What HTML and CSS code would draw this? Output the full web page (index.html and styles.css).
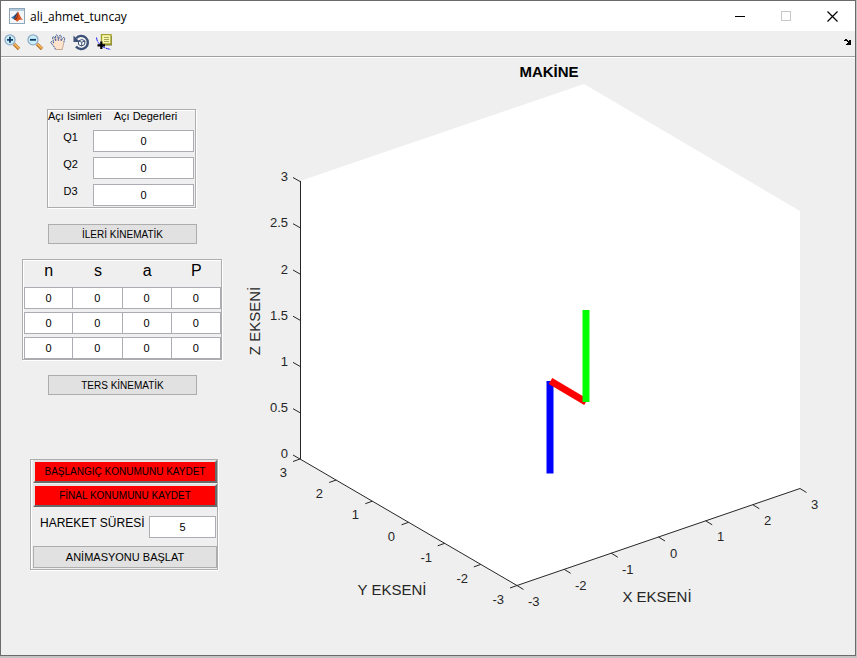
FILE: index.html
```html
<!DOCTYPE html>
<html lang="tr">
<head>
    <meta charset="UTF-8">
    <meta name="viewport" content="width=device-width, initial-scale=1.0">
    <title>ali_ahmet_tuncay</title>
    <link rel="stylesheet" href="styles.css">
</head>
<body>

<div class="window">
    <header class="titlebar">
        <svg class="app-icon" width="16" height="16" viewBox="0 0 16 16">
            <rect x="0.5" y="0.5" width="15" height="15" fill="#f4f7fa" stroke="#8fa5b8"/>
            <rect x="1" y="1" width="14" height="2" fill="#b4cbdd"/>
            <path d="M2 9.5 L5.5 7.5 L7.5 9 L5 11.5 Z" fill="#3d78b4"/>
            <path d="M5.5 7.5 L9 3.5 L8 8.5 L5 11.5 Z" fill="#26436e"/>
            <path d="M9 3.5 C10 5 11.5 10 14 12 C12 11 10.5 11 8 14 C7.5 12.5 6.5 12 5 11.5 C7 10.5 7.8 6 9 3.5 Z" fill="#d9541e"/>
            <path d="M9 3.5 C8.5 7 8 10 5 11.5 L7 12 C9 9.5 9.5 6 9 3.5 Z" fill="#8c2a14"/>
        </svg>
        <h1>ali_ahmet_tuncay</h1>
        <div class="window-buttons">
            <button type="button" aria-label="Minimize">
                <svg width="11" height="11"><path d="M0 5.5 H10" stroke="#000"/></svg>
            </button>
            <button type="button" aria-label="Maximize" disabled>
                <svg width="11" height="11"><rect x="0.5" y="0.5" width="9" height="9" fill="none" stroke="#c8c8c8"/></svg>
            </button>
            <button type="button" aria-label="Close">
                <svg width="11" height="11"><path d="M0.5 0.5 L10.5 10.5 M10.5 0.5 L0.5 10.5" stroke="#000" stroke-width="1.2"/></svg>
            </button>
        </div>
    </header>

    <div class="toolbar">
        <button type="button" aria-label="Zoom In">
            <svg width="17" height="17" viewBox="0 0 17 17">
                <path d="M10 10 L15 15" stroke="#b9762b" stroke-width="3.4"/>
                <path d="M10.5 10 L15 14.3" stroke="#f2b35c" stroke-width="1.8"/>
                <circle cx="6" cy="5.8" r="5" fill="#c9effa" stroke="#8fabc8" stroke-width="1.3"/>
                <path d="M3 5.8 H9 M6 2.8 V8.8" stroke="#123a66" stroke-width="1.8"/>
            </svg>
        </button>
        <button type="button" aria-label="Zoom Out">
            <svg width="17" height="17" viewBox="0 0 17 17">
                <path d="M10 10 L15 15" stroke="#b9762b" stroke-width="3.4"/>
                <path d="M10.5 10 L15 14.3" stroke="#f2b35c" stroke-width="1.8"/>
                <circle cx="6" cy="5.8" r="5" fill="#c9effa" stroke="#8fabc8" stroke-width="1.3"/>
                <path d="M3 5.8 H9" stroke="#123a66" stroke-width="1.8"/>
            </svg>
        </button>
        <button type="button" aria-label="Pan">
            <svg width="17" height="17" viewBox="0 0 17 17">
                <path d="M5.5 15.5 C4.5 12.5 2 10.5 0.8 8.5 C0.8 7.2 2.5 7.5 3.8 9 L2.6 3.8 C2.6 2.4 4 2.3 4.5 3.6 L5.8 7 L5.6 2 C5.8 0.6 7.4 0.6 7.7 2 L8.4 6.5 L9.3 2 C9.7 0.8 11.2 1 11.2 2.3 L11 7 L13 3.8 C13.8 2.8 15 3.5 14.7 4.7 L13.6 9.5 C13.4 12 12.5 13 12.2 15.5 Z" fill="#ffe3cd"/>
                <path d="M5.5 15.5 C4.5 12.5 2 10.5 0.8 8.5 C0.8 7.2 2.5 7.5 3.8 9 L2.6 3.8 C2.6 2.4 4 2.3 4.5 3.6 L5.8 7 L5.6 2 C5.8 0.6 7.4 0.6 7.7 2 L8.4 6.5 L9.3 2 C9.7 0.8 11.2 1 11.2 2.3 L11 7 L13 3.8 C13.8 2.8 15 3.5 14.7 4.7 L13.6 9.5" fill="none" stroke="#35599a" stroke-dasharray="2 0.7"/>
                <path d="M13.6 9.5 C13.4 12 12.5 13 12.2 15.5 H5.5" fill="none" stroke="#c9a58c"/>
            </svg>
        </button>
        <button type="button" aria-label="Rotate 3D">
            <svg width="17" height="17" viewBox="0 0 17 17">
                <path d="M3.2 4.2 A6.6 6.6 0 1 1 3 12.5" fill="none" stroke="#3c5078" stroke-width="2.4"/>
                <path d="M0.5 1.5 V8 H7 Z" fill="#3c5078"/>
                <path d="M5.5 7 L9 5.5 L12 7 L11.5 10.5 L8.5 12 L5.5 10.5 Z" fill="#fff" stroke="#3c5078"/>
                <path d="M5.5 7 L8.7 8.2 L12 7 M8.7 8.2 V12" fill="none" stroke="#3c5078"/>
            </svg>
        </button>
        <button type="button" aria-label="Data Cursor">
            <svg width="17" height="17" viewBox="0 0 17 17">
                <path d="M0.5 3.5 C1 7 2 9 4.5 11 C7 13.5 10 14.5 15 15.5" fill="none" stroke="#1a1aff" stroke-dasharray="4 1"/>
                <rect x="7" y="2" width="9" height="9.5" fill="#77773c"/>
                <rect x="5.5" y="0.5" width="9.5" height="9.5" fill="#f8f8b0" stroke="#a3a332" stroke-width="1.4"/>
                <path d="M8 3.5 H13 M8 5.5 H13 M8 7.5 H13" stroke="#a3a35a"/>
                <path d="M1.5 11.3 H9 M5.3 7.5 V15" stroke="#000" stroke-width="2.2"/>
            </svg>
        </button>
        <button type="button" class="dock" aria-label="Dock Figure">
            <svg width="7" height="6" viewBox="0 0 7 6">
                <path d="M0 1 H1 V0 H3 V1 H4 V2 H5 V1 H7 V6 H2 V5 H3 V4 H4 V3 H3 V2 H0 Z" fill="#000"/>
            </svg>
        </button>
    </div>

    <main class="content">
        <form class="controls">
            <fieldset class="panel angles">
                <span>Açı Isimleri</span>
                <span>Açı Degerleri</span>
                <label for="q1">Q1</label>
                <input type="text" id="q1" value="0">
                <label for="q2">Q2</label>
                <input type="text" id="q2" value="0">
                <label for="d3">D3</label>
                <input type="text" id="d3" value="0">
            </fieldset>

            <button type="button" class="btn">İLERİ KİNEMATİK</button>

            <div class="panel matrix">
                <table>
                    <thead>
                        <tr>
                            <th scope="col" id="col-n">n</th>
                            <th scope="col" id="col-s">s</th>
                            <th scope="col" id="col-a">a</th>
                            <th scope="col" id="col-p">P</th>
                        </tr>
                    </thead>
                    <tbody>
                        <tr>
                            <td><input type="text" value="0" aria-labelledby="col-n"></td>
                            <td><input type="text" value="0" aria-labelledby="col-s"></td>
                            <td><input type="text" value="0" aria-labelledby="col-a"></td>
                            <td><input type="text" value="0" aria-labelledby="col-p"></td>
                        </tr>
                        <tr>
                            <td><input type="text" value="0" aria-labelledby="col-n"></td>
                            <td><input type="text" value="0" aria-labelledby="col-s"></td>
                            <td><input type="text" value="0" aria-labelledby="col-a"></td>
                            <td><input type="text" value="0" aria-labelledby="col-p"></td>
                        </tr>
                        <tr>
                            <td><input type="text" value="0" aria-labelledby="col-n"></td>
                            <td><input type="text" value="0" aria-labelledby="col-s"></td>
                            <td><input type="text" value="0" aria-labelledby="col-a"></td>
                            <td><input type="text" value="0" aria-labelledby="col-p"></td>
                        </tr>
                    </tbody>
                </table>
            </div>

            <button type="button" class="btn">TERS KİNEMATİK</button>

            <fieldset class="panel animation">
                <button type="button" class="btn-save">BAŞLANGIÇ KONUMUNU KAYDET</button>
                <button type="button" class="btn-save">FİNAL KONUMUNU KAYDET</button>
                <div class="duration">
                    <label for="sure">HAREKET SÜRESİ</label>
                    <input type="text" id="sure" value="5">
                </div>
                <button type="button" class="btn btn-start">ANİMASYONU BAŞLAT</button>
            </fieldset>
        </form>

        <svg class="plot" viewBox="244 57 611 598" role="img" aria-label="MAKİNE">
            <polygon points="300,181 584,84 800,211 800,488.5 517,585.5 300,459" fill="#fff"/>

            <!-- axes -->
            <g class="axis">
                <path d="M300.5 181 V459"/>
                <path d="M300 459 L517 585.5 L800 488.5"/>
                <!-- z ticks -->
                <path d="M300 181.5 l-7 -4 M300 227.7 l-7 -4 M300 274 l-7 -4 M300 320.2 l-7 -4 M300 366.4 l-7 -4 M300 412.7 l-7 -4 M300 459 l-7 -4"/>
                <!-- y ticks -->
                <path d="M300 459 l-7 2.5 M336.2 480 l-7 2.5 M372.3 501.2 l-7 2.5 M408.5 522.3 l-7 2.5 M444.7 543.3 l-7 2.5 M480.8 564.4 l-7 2.5 M517 585.5 l-7 2.5"/>
                <!-- x ticks -->
                <path d="M517 585.5 l6.5 4 M564.2 569.3 l6.5 4 M611.3 553.2 l6.5 4 M658.5 537 l6.5 4 M705.7 520.8 l6.5 4 M752.8 504.7 l6.5 4 M800 488.5 l6.5 4"/>
            </g>

            <!-- robot arm -->
            <g class="arm">
                <path d="M550 381 V473.5" stroke="#0000ff"/>
                <path d="M550.5 381 L586 402" stroke="#ff0000"/>
                <path d="M586 310 V402" stroke="#00ff00"/>
            </g>

            <g class="ticks ticks-end">
                <text x="288" y="181">3</text>
                <text x="288" y="227">2.5</text>
                <text x="288" y="274">2</text>
                <text x="288" y="320">1.5</text>
                <text x="288" y="366">1</text>
                <text x="288" y="412">0.5</text>
                <text x="288" y="458">0</text>
            </g>
            <g class="ticks ticks-end">
                <text x="287" y="477">3</text>
                <text x="323" y="498">2</text>
                <text x="359" y="519">1</text>
                <text x="395" y="541">0</text>
                <text x="432" y="562">-1</text>
                <text x="468" y="583">-2</text>
                <text x="504" y="604">-3</text>
            </g>
            <g class="ticks">
                <text x="528" y="606">-3</text>
                <text x="575" y="590">-2</text>
                <text x="622" y="574">-1</text>
                <text x="670" y="558">0</text>
                <text x="717" y="541">1</text>
                <text x="764" y="525">2</text>
                <text x="811" y="509">3</text>
            </g>

            <text class="title" x="549" y="77">MAKİNE</text>
            <text class="axis-label" x="392" y="595">Y EKSENİ</text>
            <text class="axis-label" x="657" y="602">X EKSENİ</text>
            <text class="axis-label" transform="translate(260 321) rotate(-90)">Z EKSENİ</text>
        </svg>
    </main>
</div>

</body>
</html>
```
FILE: styles.css
```css
* {
    box-sizing: border-box;
}

body {
    margin: 0;
    padding: 0 1px 2px 0;
    min-height: 100vh;
    display: flex;
    background-color: #c3c3c3;
    font-family: "Liberation Sans", Arial, sans-serif;
    font-size: 11px;
    color: #000;
}

.window {
    flex: 1;
    display: flex;
    flex-direction: column;
    background-color: #efefef;
    border: 1px solid #6b6b6b;
}

button {
    font-family: inherit;
    color: #000;
    padding: 0;
}

/* Title bar */
.titlebar {
    display: flex;
    align-items: center;
    height: 30px;
    padding-left: 8px;
    background-color: #fff;
}

.titlebar h1 {
    flex: 1;
    margin: 0 0 0 5px;
    font-family: "Open Sans", "Noto Sans", sans-serif;
    font-size: 12px;
    font-weight: normal;
}

.window-buttons {
    display: flex;
    height: 100%;
}

.window-buttons button {
    display: flex;
    align-items: center;
    justify-content: center;
    width: 46px;
    background: none;
    border: none;
}

/* Toolbar */
.toolbar {
    display: flex;
    align-items: center;
    height: 26px;
    padding: 0 4px 3px 3px;
    border-bottom: 1px solid #a0a0a0;
    box-shadow: 0 1px 0 #fff;
}

.toolbar button {
    width: 23px;
    height: 17px;
    background: none;
    border: none;
    text-align: left;
}

.toolbar svg {
    display: block;
}

.toolbar .dock {
    width: 7px;
    height: 6px;
    margin-left: auto;
}

/* Main area */
.content {
    flex: 1;
    display: flex;
    align-items: flex-start;
}

.controls {
    flex: 0 0 243px;
    display: flex;
    flex-direction: column;
    align-items: flex-start;
    padding-top: 52px;
}

.panel {
    margin: 0;
    padding: 0;
    border: 1px solid #adadad;
    box-shadow: 1px 1px 0 #fff, inset 1px 1px 0 #fff;
}

input {
    display: block;
    width: 100%;
    height: 22px;
    padding: 0;
    border: 1px solid #abadb3;
    background-color: #fff;
    font-family: inherit;
    font-size: 11px;
    text-align: center;
    color: #000;
}

.btn {
    width: 149px;
    height: 20px;
    margin-left: 47px;
    border: 1px solid #adadad;
    background-color: #e1e1e1;
    font-size: 10px;
}

.angles {
    display: grid;
    grid-template-columns: 45px 101px;
    grid-template-rows: 15px;
    row-gap: 5px;
    width: 149px;
    height: 99px;
    margin: 0 0 16px 46px;
    line-height: 14px;
    text-align: center;
    white-space: nowrap;
}

.angles span {
    padding-left: 4px;
    line-height: 12px;
}

.angles span:first-child {
    padding-left: 0;
}

.matrix {
    width: 200px;
    margin: 15px 0 15px 21px;
    padding: 0 0 0 1px;
}

.matrix table {
    width: 100%;
    border-collapse: collapse;
    table-layout: fixed;
}

.matrix th {
    height: 27px;
    padding: 0 0 6px;
    font-size: 16px;
    font-weight: normal;
    line-height: 18px;
}

.matrix td {
    padding: 0 0 3px;
}

.matrix tr:last-child td {
    padding-bottom: 0;
}

.matrix td + td input {
    border-left: none;
}

.animation {
    display: flex;
    flex-direction: column;
    gap: 1px;
    width: 188px;
    margin: 64px 0 0 29px;
    padding: 0 0 1px 2px;
}

.btn-save {
    height: 23px;
    border: 2px solid;
    border-color: #e3e3e3 #696969 #696969 #e3e3e3;
    background-color: #ff0000;
    font-size: 10px;
    white-space: nowrap;
}

.duration {
    display: flex;
    justify-content: space-between;
    padding: 8px 1px 7px 7px;
}

.duration label {
    font-size: 12px;
    line-height: 14px;
}

.duration input {
    width: 67px;
}

.btn-start {
    width: 100%;
    height: 22px;
    margin: 0;
    font-size: 11px;
}

/* 3D plot */
.plot {
    flex: 1;
    min-width: 0;
}

.axis path {
    fill: none;
    stroke: #262626;
}

.arm path {
    fill: none;
    stroke-width: 7;
}

.ticks {
    font-size: 13px;
    fill: #262626;
}

.ticks-end {
    text-anchor: end;
}

.title {
    font-size: 15px;
    font-weight: bold;
    text-anchor: middle;
}

.axis-label {
    font-size: 15px;
    fill: #262626;
    text-anchor: middle;
}
```
